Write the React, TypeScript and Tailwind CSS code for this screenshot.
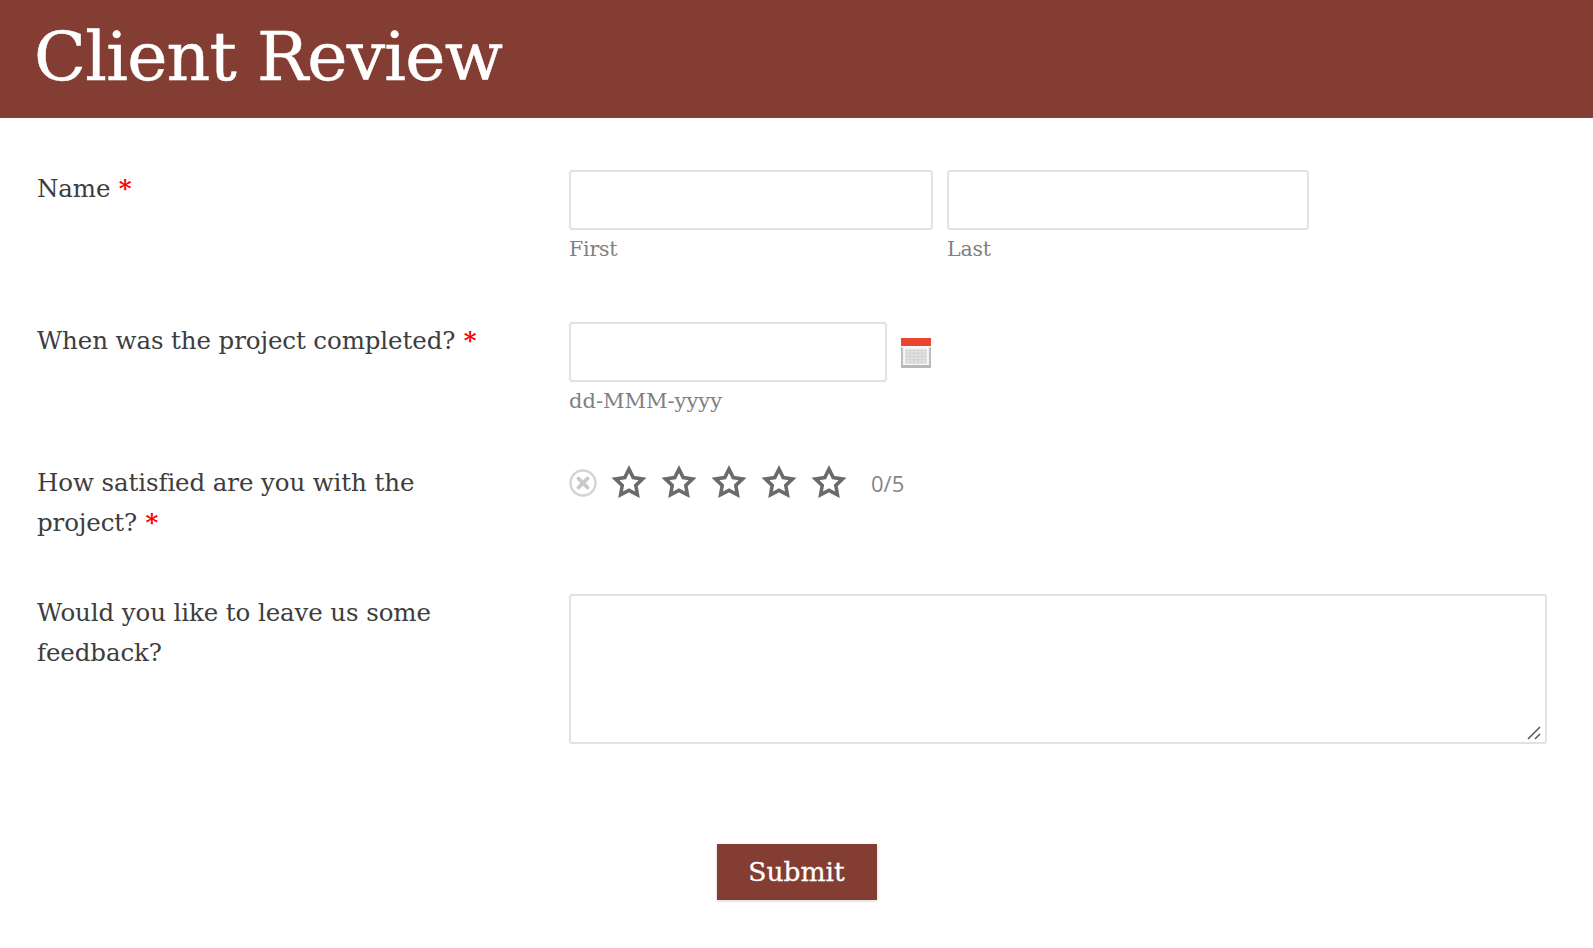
const serif = "font-['DejaVu_Serif','Liberation_Serif',serif]";

function Required() {
  return <span className="font-bold text-[#ff0000]"> *</span>;
}

function Star() {
  return (
    <svg width="36" height="36" viewBox="0 0 36 36" className="blur-[0.5px]">
      <path
        d="M18 5l4.200 8.500 9.400 1.400-6.800 6.600 1.600 9.300-8.400-4.400-8.400 4.400 1.600-9.300-6.800-6.600 9.400-1.400z"
        fill="none"
        stroke="#6b6b6b"
        strokeWidth="3.600"
        strokeLinejoin="miter"
      />
    </svg>
  );
}

function ClearIcon() {
  return (
    <svg width="28" height="28" viewBox="0 0 28 28" className="blur-[0.5px]">
      <circle cx="14" cy="14" r="12.500" fill="#fff" stroke="#d4d4d4" strokeWidth="2.400" />
      <path d="M9.500 9.500l9 9M18.500 9.500l-9 9" stroke="#c8c8c8" strokeWidth="3.800" strokeLinecap="round" />
    </svg>
  );
}

function CalendarIcon() {
  return (
    <svg width="30" height="30" viewBox="0 0 30 30" className="mt-[1px] blur-[0.3px]">
      <rect x="1" y="1" width="28" height="28" fill="#f4f4f4" stroke="#bdbdbd" strokeWidth="2" />
      <rect x="0" y="0" width="30" height="8" fill="#e8452c" />
      <rect x="0" y="8" width="30" height="1.500" fill="#f8f8f8" />
      <path
        d="M5 12h20v13H5zM5 15.200h20M5 18.500h20M5 21.800h20M9 12v13M13 12v13M17 12v13M21 12v13"
        fill="#e4e4e4"
        stroke="#cfcfcf"
      />
      <rect x="0" y="27" width="30" height="3" fill="#b8b8b8" />
    </svg>
  );
}

const inputClass =
  "h-[60px] rounded-[3px] border-2 border-[#e2e2e2] bg-white outline-none";
const labelClass = "text-[24.500px] leading-[40px] tracking-[-0.1px]";
const hintClass = "mt-[4px] text-[20.500px] leading-[30px] tracking-[-0.2px] text-[#808080]";

export default function App() {
  return (
    <div className={`min-h-[948px] bg-white text-[#3d3d3d] ${serif}`}>
      <header className="h-[118px] bg-[#833d32] pl-[34px]">
        <h1 className="text-[68px] leading-[114px] tracking-[-0.8px] text-white [-webkit-text-stroke:0.5px_white]">
          Client Review
        </h1>
      </header>

      <form className="pt-[52px]">
        <div className="grid grid-cols-[532px_1fr] pl-[37px]">
          <label className={`${labelClass} -mt-px`}>
            Name
            <Required />
          </label>
          <div className="flex gap-[14px]">
            <div className="w-[364px]">
              <input className={`${inputClass} w-full`} />
              <div className={hintClass}>First</div>
            </div>
            <div className="w-[362px]">
              <input className={`${inputClass} w-full`} />
              <div className={hintClass}>Last</div>
            </div>
          </div>
        </div>

        <div className="mt-[58px] grid grid-cols-[532px_1fr] pl-[37px]">
          <label className={`${labelClass} -mt-px`}>
            When was the project completed?
            <Required />
          </label>
          <div>
            <div className="flex items-center gap-[14px]">
              <input className={`${inputClass} w-[318px]`} />
              <CalendarIcon />
            </div>
            <div className="mt-[4px] text-[21px] leading-[30px] text-[#808080]">dd-MMM-yyyy</div>
          </div>
        </div>

        <div className="mt-[47px] grid grid-cols-[532px_1fr] pl-[37px]">
          <label className={`${labelClass} w-[430px]`}>
            How satisfied are you with the project?
            <Required />
          </label>
          <div className="flex h-[40px] items-center">
            <ClearIcon />
            <div className="-mt-[2px] ml-[14px] flex gap-[14px]">
              <Star />
              <Star />
              <Star />
              <Star />
              <Star />
            </div>
            <span className="ml-[24px] font-['Open_Sans',sans-serif] text-[22px] text-[#868686]">0/5</span>
          </div>
        </div>

        <div className="mt-[51px] grid grid-cols-[532px_1fr] pl-[37px]">
          <label className={`${labelClass} -mt-px w-[430px]`}>
            Would you like to leave us some feedback?
          </label>
          <div className="relative w-[978px]">
            <textarea className="block h-[150px] w-full resize-none rounded-[3px] border-2 border-[#e2e2e2] bg-white outline-none" />
            <svg width="14" height="14" viewBox="0 0 14 14" className="absolute right-[6px] bottom-[4px]">
              <path d="M1 13L13 1M8 13l5-5" stroke="#555" strokeWidth="1.500" />
            </svg>
          </div>
        </div>

        <div className="mt-[100px] flex justify-center">
          <button
            type="button"
            className="h-[56px] w-[160px] bg-[#833d32] text-[26.500px] text-white shadow-[0_1px_3px_rgba(0,0,0,0.2)] [-webkit-text-stroke:0.3px_white]"
          >
            Submit
          </button>
        </div>
      </form>
    </div>
  );
}
